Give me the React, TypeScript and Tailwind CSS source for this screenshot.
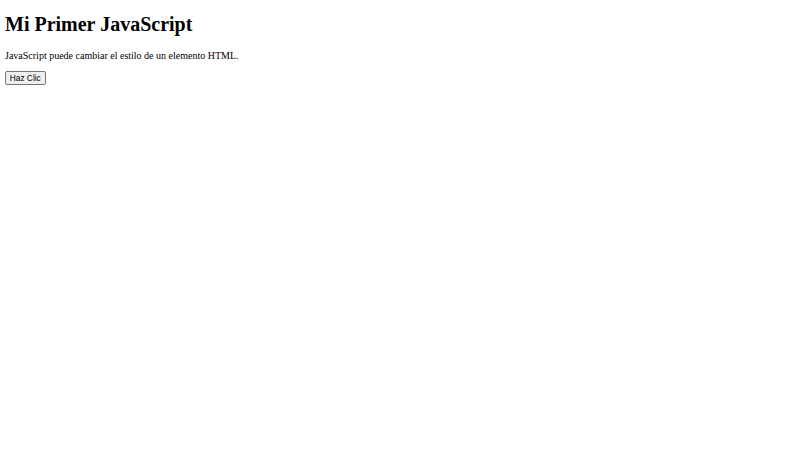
export default function App() {
  return (
    <div className="min-h-[450px] bg-white px-[5px] text-black" style={{ fontFamily: '"Liberation Serif", "Times New Roman", serif' }}>
      <h1 className="mt-[13.4px] mb-[13.4px] text-[20px] font-bold leading-[23px]">Mi Primer JavaScript</h1>
      <p className="my-[10px] text-[10px] leading-[11.5px]">JavaScript puede cambiar el estilo de un elemento HTML.</p>
      <button
        type="button"
        className="block rounded-[2px] border border-[#767676] bg-[#efefef] px-[3.75px] py-[1px] text-[8.33px] leading-[10px]"
        style={{ fontFamily: '"Liberation Sans", Arial, sans-serif' }}
      >
        Haz Clic
      </button>
    </div>
  );
}
